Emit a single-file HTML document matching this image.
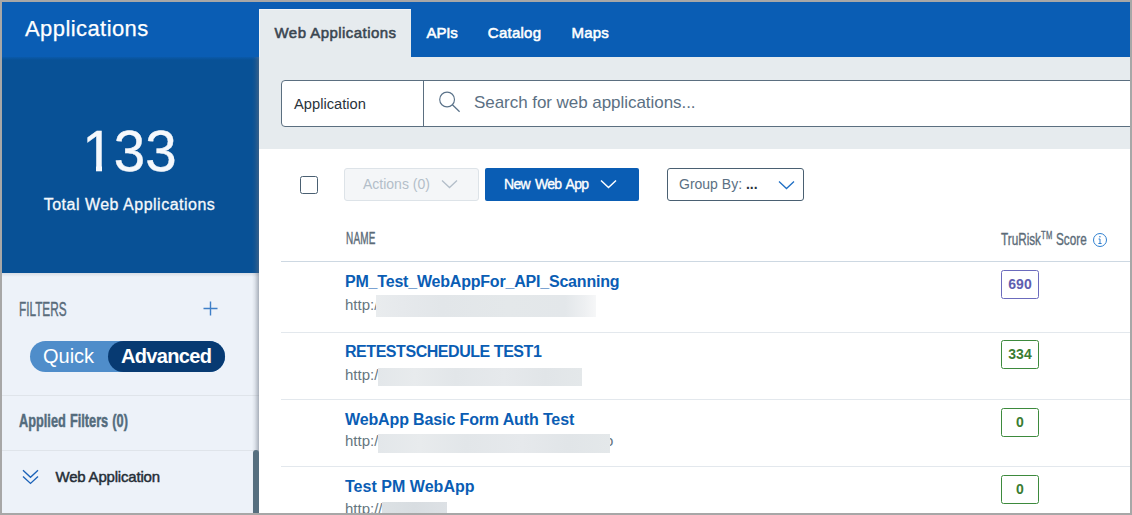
<!DOCTYPE html>
<html lang="en">
<head>
<meta charset="utf-8">
<title>Applications</title>
<style>
*{box-sizing:border-box;margin:0;padding:0}
html,body{width:1132px;height:515px;overflow:hidden;background:#fff}
body{font-family:"Liberation Sans",sans-serif;position:relative;color:#2a333b}
.abs{position:absolute}
.nw{white-space:nowrap}
.cond{display:inline-block;transform-origin:0 50%;white-space:nowrap}
/* frame */
#frame{left:0;top:0;width:1132px;height:515px;border:2px solid #a7a7a7;z-index:50;pointer-events:none}
/* header */
#hdr{left:0;top:0;width:1132px;height:57px;background:#0a5db4}
#title{left:25px;top:15px;font-size:22px;line-height:28px;color:#fff;letter-spacing:.42px;-webkit-text-stroke:.25px #fff}
#tab{left:259px;top:9px;width:152px;height:48px;background:#e6ebee;border-top:1px solid #f2f5f6;border-left:1px solid #f2f5f6}
.tabt{top:24px;font-size:15px;line-height:18px;color:#fff;-webkit-text-stroke:.55px currentColor}
/* sidebar */
#side{left:0;top:57px;width:259px;height:458px;background:#edf2f9}
#count{left:0;top:57px;width:259px;height:216px;background:linear-gradient(180deg,#0a5aab 0,#085196 3px)}
#num{left:0;width:259px;top:120px;text-align:center;font-size:56.5px;line-height:64px;color:#f5f8fc;-webkit-text-stroke:.4px #f5f8fc}
#numl{left:0;width:259px;top:195px;text-align:center;font-size:16px;line-height:20px;color:#f5f8fc;letter-spacing:.5px;-webkit-text-stroke:.3px #f5f8fc}
.hl{height:1px;background:#dfe4ea}
/* main */
#band{left:259px;top:57px;width:873px;height:92px;background:#e6ebee}
#sbox{left:281px;top:80px;width:860px;height:47px;background:#fff;border:1px solid #5b6f80;border-radius:4px 0 0 4px}
#sdiv{left:423px;top:80px;width:1px;height:47px;background:#5b6f80}
.rt{left:345px;font-size:16px;line-height:20px;font-weight:bold;color:#0a5db4}
.ru{left:345px;font-size:15px;line-height:18px;color:#66767f}
.red2{background:linear-gradient(90deg,#e3e7ea 0,#e8ebed 18%,#e2e6e9 38%,#e6e9ec 62%,#e1e5e8 82%,#e4e8ea 100%)}
.rl{left:281px;width:849px;height:1px;background:#e3e8ed}
.bd{left:1001px;width:38px;height:29px;border:1.5px solid #3d8a3d;border-radius:2.5px;color:#3a7d33;font-size:14px;font-weight:bold;line-height:27.5px;text-align:center;background:#fff}
</style>
</head>
<body>
<!-- header -->
<div id="hdr" class="abs"></div>
<div id="title" class="abs nw">Applications</div>
<div id="tab" class="abs"></div>
<div class="abs tabt nw" style="left:274.5px;color:#3a4651;letter-spacing:.45px">Web Applications</div>
<div class="abs tabt nw" style="left:426.6px;letter-spacing:-.2px">APIs</div>
<div class="abs tabt nw" style="left:487.8px;letter-spacing:.25px">Catalog</div>
<div class="abs tabt nw" style="left:571.6px;letter-spacing:.2px">Maps</div>

<!-- sidebar -->
<div id="side" class="abs"></div>
<div id="count" class="abs"></div>
<div class="abs" style="left:0;top:273px;width:259px;height:4px;background:linear-gradient(180deg,rgba(100,110,125,.16),rgba(100,110,125,0))"></div>
<div id="num" class="abs nw">133</div>
<div class="abs" style="left:84px;top:166px;width:12px;height:8px;background:#085196"></div><div class="abs" style="left:102px;top:166px;width:12px;height:8px;background:#085196"></div>
<div id="numl" class="abs nw">Total Web Applications</div>

<div class="abs nw" style="left:19px;top:297px;font-size:20.5px;line-height:24px;color:#5a6b7a"><span class="cond" id="filters" style="transform:scaleX(.575);-webkit-text-stroke:.45px #566b7c">FILTERS</span></div>
<svg class="abs" style="left:203px;top:301px" width="15" height="15" viewBox="0 0 15 15"><path d="M7.5 0.5V14.5M0.5 7.5H14.5" stroke="#3f7fc8" stroke-width="1.4" fill="none"/></svg>

<div class="abs" style="left:30px;top:341px;width:195px;height:31px;border-radius:16px;background:#4f8dca"></div>
<div class="abs" style="left:108px;top:341px;width:117px;height:31px;border-radius:16px;background:#073a72"></div>
<div class="abs nw" style="left:43px;top:344px;font-size:20px;line-height:24px;color:#fff">Quick</div>
<div class="abs nw" style="left:121px;top:344px;font-size:20px;line-height:24px;color:#fff;font-weight:bold;letter-spacing:-.65px">Advanced</div>

<div class="abs hl" style="left:2px;top:395px;width:257px"></div>
<div class="abs nw" style="left:19px;top:409px;font-size:19px;line-height:24px;color:#546c7d;font-weight:bold"><span class="cond" id="applied" style="transform:scaleX(.672);-webkit-text-stroke:.5px #546c7d;word-spacing:.8px">Applied Filters (0)</span></div>
<div class="abs hl" style="left:2px;top:450px;width:257px"></div>
<svg class="abs" style="left:22px;top:469px" width="18" height="16" viewBox="0 0 18 16"><path d="M1 1.3L8.5 8.3L16 1.3M1 7.4L8.5 14.4L16 7.4" stroke="#1b62b8" stroke-width="1.35" fill="none"/></svg>
<div class="abs nw" style="left:55.5px;top:467px;font-size:15px;line-height:20px;color:#242d36;letter-spacing:-.2px;-webkit-text-stroke:.45px #242d36">Web Application</div>
<div class="abs" style="left:253px;top:450px;width:6px;height:70px;border-radius:3px;background:#566f7f;z-index:5"></div>

<!-- main -->
<div class="abs" style="left:259px;top:57px;width:873px;height:458px;background:#fff"></div>
<div class="abs" style="left:252px;top:57px;width:7px;height:458px;background:linear-gradient(90deg,rgba(100,110,125,0) 0,rgba(100,110,125,.12) 40%,rgba(100,110,125,.5) 100%)"></div>
<div id="band" class="abs"></div>
<div id="sbox" class="abs"></div>
<div id="sdiv" class="abs"></div>
<div class="abs nw" style="left:294px;top:94px;font-size:14.7px;line-height:20px;color:#2a333b">Application</div>
<svg class="abs" style="left:437px;top:91px" width="26" height="24" viewBox="0 0 26 24"><circle cx="10.1" cy="8.5" r="7.4" stroke="#5a7289" stroke-width="1.15" fill="none"/><path d="M15.4 13.8L22.6 20.8" stroke="#5a7289" stroke-width="1.25" fill="none"/></svg>
<div class="abs nw" style="left:474px;top:92px;font-size:17px;line-height:22px;color:#5b7083;letter-spacing:-.05px">Search for web applications...</div>

<!-- toolbar -->
<div class="abs" style="left:300px;top:176px;width:18px;height:18px;border:1.5px solid #4a6072;border-radius:2.5px;background:#fff"></div>
<div class="abs" style="left:344px;top:168px;width:135px;height:33px;border:1px solid #dde3e8;border-radius:3px;background:#f4f6f8"></div>
<div class="abs nw" style="left:363px;top:175px;font-size:14px;line-height:18px;color:#b3bec9">Actions (0)</div>
<svg class="abs" style="left:441px;top:179px" width="17" height="10" viewBox="0 0 17 10"><path d="M1 1.5L8.5 8.5L16 1.5" stroke="#b3bec9" stroke-width="1.3" fill="none"/></svg>
<div class="abs" style="left:485px;top:168px;width:154px;height:33px;border-radius:2px;background:#0a5db4"></div>
<div class="abs nw" style="left:504px;top:175px;font-size:14px;line-height:18px;color:#fff;-webkit-text-stroke:.35px #fff;letter-spacing:-.65px;word-spacing:1.6px" id="nwa">New Web App</div>
<svg class="abs" style="left:600px;top:179px" width="17" height="10" viewBox="0 0 17 10"><path d="M1 1.5L8.5 8.5L16 1.5" stroke="#fff" stroke-width="1.5" fill="none"/></svg>
<div class="abs" style="left:667px;top:168px;width:137px;height:33px;border:1px solid #4a6072;border-radius:3px;background:#fff"></div>
<div class="abs nw" style="left:679px;top:175px;font-size:14px;line-height:18px;color:#5b7083">Group By: <b style="color:#2a333b">...</b></div>
<svg class="abs" style="left:778px;top:179.5px" width="17" height="10" viewBox="0 0 17 10"><path d="M1 1.5L8.5 8.5L16 1.5" stroke="#1f6fc4" stroke-width="1.3" fill="none"/></svg>

<!-- table header -->
<div class="abs nw" style="left:345.6px;top:228px;font-size:16.2px;line-height:20px;color:#5b6b78"><span class="cond" id="name" style="transform:scaleX(.615);-webkit-text-stroke:.4px #5b6b78;letter-spacing:.4px">NAME</span></div>
<div class="abs nw" style="left:1001.3px;top:229.8px;font-size:17px;line-height:20px;color:#5b6b78"><span class="cond" id="tru" style="transform:scaleX(.69);-webkit-text-stroke:.35px #5b6b78">TruRisk<span style="font-size:11px;position:relative;top:-5.5px;line-height:0;letter-spacing:.6px">TM</span> Score</span></div>
<svg class="abs" style="left:1092px;top:232px" width="16" height="16" viewBox="0 0 16 16"><circle cx="8" cy="8" r="6.5" stroke="#2f7fd0" stroke-width="1" fill="none"/><path d="M8 7V11.5M6.6 7H8M6.4 11.5H9.6" stroke="#2f7fd0" stroke-width="1" fill="none"/><circle cx="7.9" cy="4.8" r=".8" fill="#2f7fd0"/></svg>
<div class="abs" style="left:281px;top:261px;width:849px;height:1px;background:#cdd8e2"></div>

<!-- rows -->
<div class="abs nw rt" style="top:272px;letter-spacing:-.2px">PM_Test_WebAppFor_API_Scanning</div>
<div class="abs nw ru" style="top:296px">http:/</div>
<div class="abs" style="left:376px;top:295px;width:220px;height:22px;background:linear-gradient(90deg,#e9ecee 0,#e6e9ec 12%,#e2e6e9 30%,#e4e8ea 60%,#e3e7ea 86%,#eef0f2 95%,#f6f7f8 100%)"></div>
<div class="abs bd" style="top:270px;border-color:#6b6bbd;color:#5e5eb0">690</div>
<div class="abs rl" style="top:332px"></div>

<div class="abs nw rt" style="top:342px;letter-spacing:-.45px">RETESTSCHEDULE TEST1</div>
<div class="abs nw ru" style="top:366px">http:/</div>
<div class="abs red2" style="left:378px;top:368px;width:204px;height:18px"></div>
<div class="abs bd" style="top:340px">334</div>
<div class="abs rl" style="top:399px"></div>

<div class="abs nw rt" style="top:410px;letter-spacing:-.13px">WebApp Basic Form Auth Test</div>
<div class="abs nw ru" style="top:432px">http:/</div>
<div class="abs nw ru" style="top:432px;left:605px">o</div>
<div class="abs red2" style="left:378px;top:434px;width:232px;height:19px"></div>
<div class="abs bd" style="top:408px">0</div>
<div class="abs rl" style="top:466px"></div>

<div class="abs nw rt" style="top:477px;letter-spacing:.03px">Test PM WebApp</div>
<div class="abs nw ru" style="top:500px">http://</div>
<div class="abs" style="left:382px;top:502px;width:65px;height:13px;background:linear-gradient(90deg,#dce1e4,#d8dde1 50%,#dde1e5)"></div>
<div class="abs bd" style="top:475px">0</div>

<div id="frame" class="abs"></div>
</body>
</html>
